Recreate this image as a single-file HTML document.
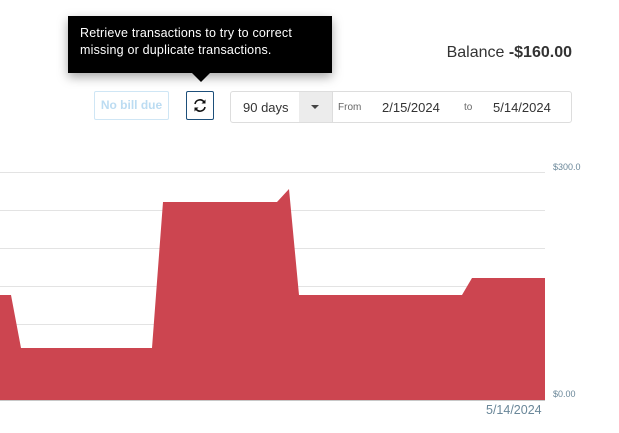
<!DOCTYPE html>
<html><head><style>
body{margin:0;width:619px;height:433px;background:#fff;font-family:"Liberation Sans",sans-serif;position:relative;overflow:hidden}
.tip{position:absolute;left:68px;top:16px;width:264px;height:57px;background:#000;color:#fff;font-size:12.5px;line-height:17px;box-sizing:border-box;padding:9px 12px;box-shadow:0 4px 10px rgba(0,0,0,.35);letter-spacing:0.2px}
.tip:after{content:"";position:absolute;left:124px;top:57px;border:9px solid transparent;border-top-color:#000;border-bottom:0}
.bal{position:absolute;right:47px;top:44px;font-size:16px;color:#333}
.bal b{font-weight:bold}
.nb{position:absolute;left:94px;top:91px;width:75px;height:29px;border:1px solid #cfe6f5;border-radius:2px;color:#bcdcf2;font-weight:bold;font-size:12px;text-align:center;line-height:27px;box-sizing:border-box;white-space:nowrap}
.rf{position:absolute;left:186px;top:91px;width:28px;height:29px;border:1px solid #1d4f7a;border-radius:2px;box-sizing:border-box}
.dr{position:absolute;left:230px;top:91px;width:342px;height:32px;border:1px solid #ddd;border-radius:3px;box-sizing:border-box;font-size:13px;color:#333}
.dr span{position:absolute;top:8px}
.dd{position:absolute;left:68px;top:0;width:33px;height:30px;background:#ececec;border-right:1px solid #ddd}
.dd:after{content:"";position:absolute;left:12px;top:13px;border:4px solid transparent;border-top:4px solid #444;border-bottom:0}
.lab{position:absolute;font-size:9px;color:#6a8799}
</style></head><body>
<div class="tip">Retrieve transactions to try to correct missing or duplicate transactions.</div>
<div class="bal">Balance <b>-$160.00</b></div>
<div class="nb">No bill due</div>
<div class="rf"><svg width="26" height="27" viewBox="0 0 26 27"><g fill="none" stroke="#111" stroke-width="1.6"><path d="M8 12a5 5 0 0 1 9-2"/><path d="M18 15a5 5 0 0 1-9 2"/></g><path d="M18.5 7.5v4h-4z M7.5 19.5v-4h4z" fill="#111"/></svg></div>
<div class="dr"><span style="left:12px">90 days</span><div class="dd"></div><span style="left:107px;font-size:10px;top:10px;color:#666">From</span><span style="left:151px">2/15/2024</span><span style="left:233px;font-size:10px;top:10px;color:#666">to</span><span style="left:262px">5/14/2024</span></div>
<svg style="position:absolute;left:0;top:0" width="619" height="433">
<g stroke="#e3e3e3" stroke-width="1"><line x1="0" y1="172.5" x2="545" y2="172.5"/><line x1="0" y1="210.5" x2="545" y2="210.5"/><line x1="0" y1="248.5" x2="545" y2="248.5"/><line x1="0" y1="286.5" x2="545" y2="286.5"/><line x1="0" y1="324.5" x2="545" y2="324.5"/><line x1="0" y1="362.5" x2="545" y2="362.5"/></g>
<polygon fill="#cc4550" points="0,295 11,295 21,348 152,348 163,202 277,202 289,189 299,295 462,295 472,278 545,278 545,400 0,400"/>
<line x1="0" y1="400.5" x2="545" y2="400.5" stroke="#c8c8c8"/>
</svg>
<div class="lab" style="left:553px;top:162px">$300.0</div>
<div class="lab" style="left:553px;top:389px">$0.00</div>
<div class="lab" style="left:486px;top:403px;font-size:12.5px">5/14/2024</div>
</body></html>
